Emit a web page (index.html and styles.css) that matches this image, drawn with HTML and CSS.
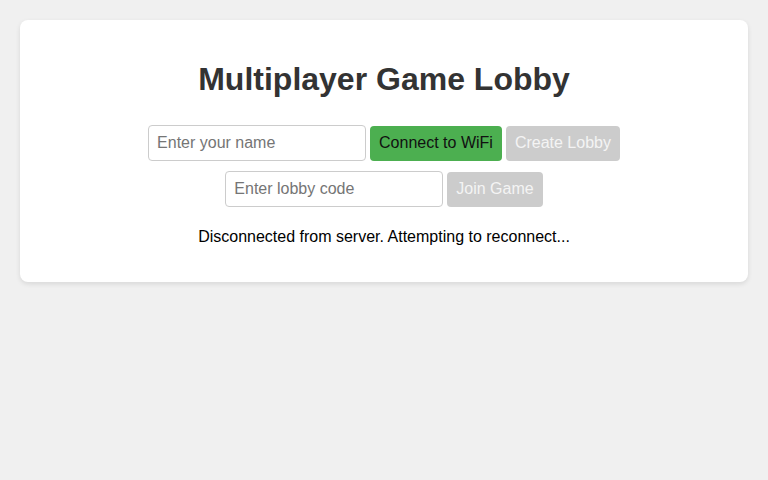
FILE: index.html
```html
<!DOCTYPE html>
<html lang="en">
<head>
<meta charset="utf-8">
<title>Multiplayer Game Lobby</title>
<link rel="stylesheet" href="styles.css">
</head>
<body>
  <main class="lobby">
    <h1 class="lobby-title">Multiplayer Game Lobby</h1>
    <div class="controls">
      <div class="row">
        <input class="field" type="text" placeholder="Enter your name">
        <button class="btn btn-connect">Connect to WiFi</button>
        <button class="btn" disabled>Create Lobby</button>
      </div>
      <div class="row">
        <input class="field" type="text" placeholder="Enter lobby code">
        <button class="btn" disabled>Join Game</button>
      </div>
    </div>
    <p class="status">Disconnected from server. Attempting to reconnect...</p>
  </main>
</body>
</html>
```
FILE: styles.css
```css
html, body {
  margin: 0;
  padding: 0;
}

body {
  background: #f0f0f0;
  font-family: "Liberation Sans", Arial, sans-serif;
  padding: 20px;
}

.lobby {
  background: #fff;
  border-radius: 8px;
  box-shadow: 0 2px 5px rgba(0, 0, 0, 0.1);
  padding: 20px;
  text-align: center;
}

.lobby-title {
  color: #333;
  font-size: 32px;
  font-weight: bold;
  margin: 21px 0 27px;
  line-height: 37px;
}

.controls {
  display: flex;
  flex-direction: column;
  gap: 10px;
}

.row {
  display: flex;
  justify-content: center;
  align-items: center;
  gap: 4px;
}

.field {
  box-sizing: border-box;
  width: 218px;
  height: 36px;
  padding: 8px;
  font: 16px "Liberation Sans", Arial, sans-serif;
  border: 1px solid #ccc;
  border-radius: 4px;
  color: #333;
}

.field::placeholder {
  color: #757575;
}

.btn {
  box-sizing: border-box;
  height: 35px;
  padding: 0 9px;
  font: 16px "Liberation Sans", Arial, sans-serif;
  border: none;
  border-radius: 4px;
  background: #ccc;
  color: #f4f4f4;
}

.btn-connect {
  background: #4caf50;
  color: #111;
}

.status {
  margin: 21px 0 16px;
  font-size: 16px;
  line-height: 18px;
  color: #000;
}
```
